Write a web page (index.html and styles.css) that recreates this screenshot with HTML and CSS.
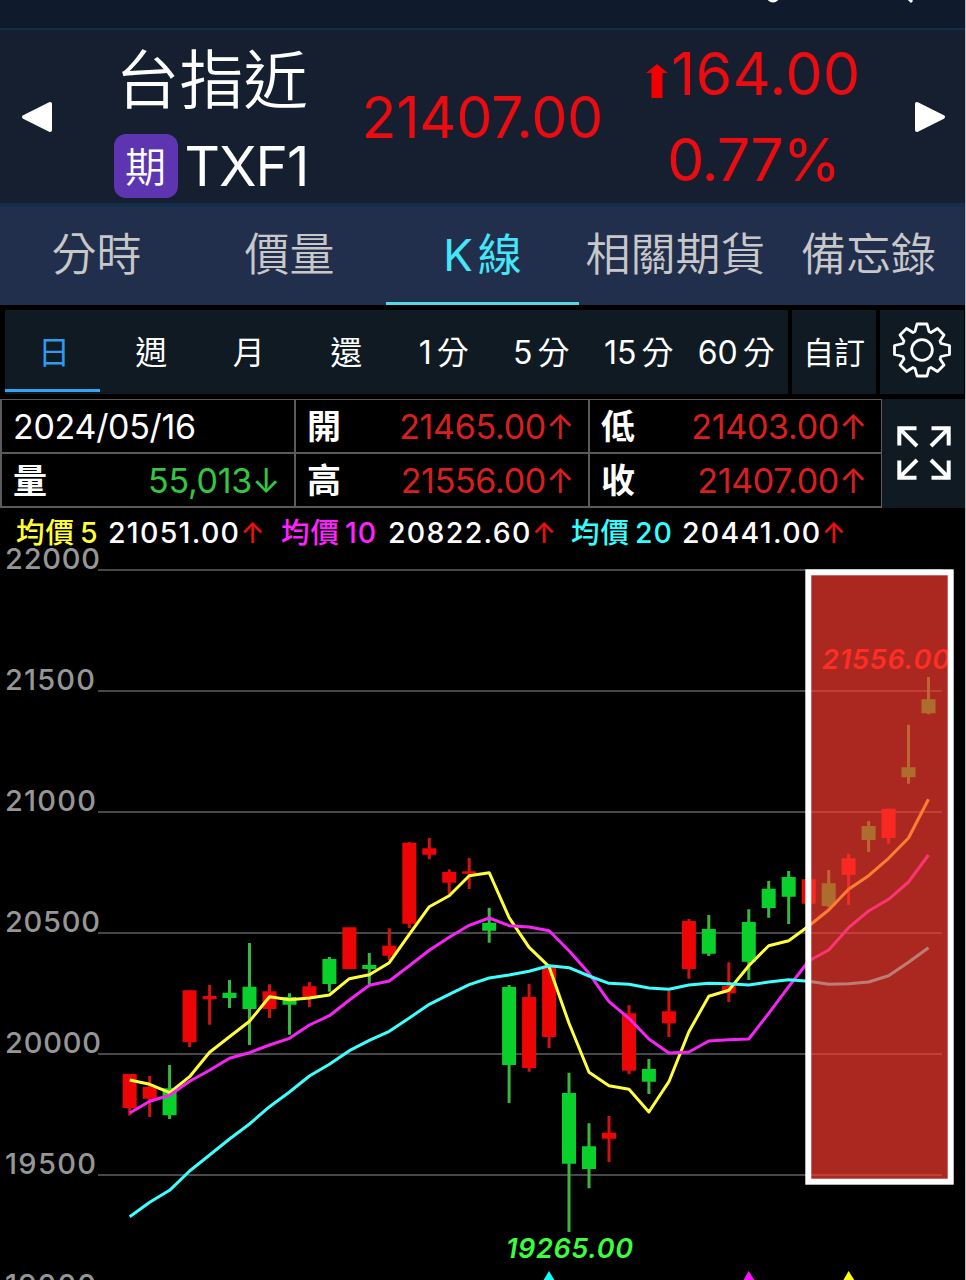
FILE: index.html
```html
<!DOCTYPE html>
<html lang="zh-Hant">
<head>
    <meta charset="utf-8" />
    <title>台指近 TXF1</title>
    <link rel="stylesheet" href="styles.css">
</head>
<body>
<div class="app">
    <div class="topbar">
        <svg width="966" height="28" viewBox="0 0 966 28">
            <path d="M767 -3Q773 5 779 -3" fill="none" stroke="#fff" stroke-width="3" />
            <path d="M908 -2L912 2" stroke="#fff" stroke-width="3" />
        </svg>
    </div>

    <!-- Quote header -->
    <header class="quote">
        <svg class="nav" width="32" height="32" viewBox="0 0 32 32"><path d="M3 16L29 3V29Z" /></svg>
        <div class="name">
            <div class="title">台指近</div>
            <div class="code"><span class="badge">期</span><span>TXF1</span></div>
        </div>
        <div class="price">21407.00</div>
        <div class="change">
            <div class="diff">
                <svg width="22" height="34" viewBox="0 0 22 34"><path d="M11 0L22 9H16.5V34H5.5V9H0Z" fill="#f00000" /></svg>
                <span>164.00</span>
            </div>
            <div class="percent">0.77%</div>
        </div>
        <svg class="nav" width="32" height="32" viewBox="0 0 32 32"><path d="M29 16L3 3V29Z" /></svg>
    </header>

    <nav class="tabs">
        <span>分時</span>
        <span>價量</span>
        <span class="active">K<i></i>線</span>
        <span>相關期貨</span>
        <span>備忘錄</span>
    </nav>

    <!-- Period selection -->
    <div class="toolbar">
        <div class="periods">
            <span class="active">日</span>
            <span>週</span>
            <span>月</span>
            <span>還</span>
            <span>1<i></i>分</span>
            <span>5<i></i>分</span>
            <span>15<i></i>分</span>
            <span>60<i></i>分</span>
        </div>
        <div class="tool">自訂</div>
        <div class="tool">
            <svg class="gear" width="62" height="62" viewBox="-31 -31 62 62">
                <path d="M-7 -18.5L-5 -26H5L7 -18.5L9 -17.5L15.5 -21.5L22 -15L18 -9L19 -6.5L27.5 -4.5V4.5L19 6.5L18 9L22 15L15.5 21.5L9 17.5L7 18.5L5 26H-5L-7 18.5L-9 17.5L-15.5 21.5L-22 15L-18 9L-19 6.5L-27.5 4.5V-4.5L-19 -6.5L-18 -9L-22 -15L-15.5 -21.5L-9 -17.5Z" />
                <circle r="10.3" />
            </svg>
        </div>
    </div>

    <div class="summary">
        <div class="cells">
            <div class="cell"><span class="date">2024/05/16</span></div>
            <div class="cell"><b>開</b><span class="up">21465.00↑</span></div>
            <div class="cell"><b>低</b><span class="up">21403.00↑</span></div>
            <div class="cell"><b>量</b><span class="down">55,013↓</span></div>
            <div class="cell"><b>高</b><span class="up">21556.00↑</span></div>
            <div class="cell"><b>收</b><span class="up">21407.00↑</span></div>
        </div>
        <div class="expand">
            <svg width="56" height="56" viewBox="0 0 56 56">
                <path d="M20.500 3.300H3.300V20.500M3.300 3.300L21 21M35.500 3.300H52.700V20.500M52.700 3.300L35 21M3.300 35.500V52.700H20.500M3.300 52.700L21 35M52.700 35.500V52.700H35.500M52.700 52.700L35 35" />
            </svg>
        </div>
    </div>

    <div class="averages">
        <div class="ma ma5"><span class="label">均價<i></i>5</span><span class="value">21051.00</span><span class="arrow">↑</span></div>
        <div class="ma ma10"><span class="label">均價<i></i>10</span><span class="value">20822.60</span><span class="arrow">↑</span></div>
        <div class="ma ma20"><span class="label">均價<i></i>20</span><span class="value">20441.00</span><span class="arrow">↑</span></div>
    </div>

    <!-- Candlestick chart -->
    <svg class="chart" width="966" height="734" viewBox="0 546 966 734">
        <path class="grid" d="M98 570H942M98 691H942M98 812H942M98 933H942M98 1054H942M98 1175H942" />
        <g class="axis">
            <text x="5" y="569" textLength="95">22000</text>
            <text x="5" y="690" textLength="90">21500</text>
            <text x="5" y="811" textLength="91">21000</text>
            <text x="5" y="932" textLength="95">20500</text>
            <text x="5" y="1053" textLength="96">20000</text>
            <text x="5" y="1174" textLength="91">19500</text>
            <text x="5" y="1295" textLength="91">19000</text>
        </g>

        <path class="wick rise" d="M129.700 1074V1115.500M149.700 1076V1117M189.600 990.500V1047M209.600 985V1024.700M269.500 984.300V1018M309.400 982V1007M389.300 928.300V960M409.300 842V928.300M429.300 838V859.300M449.200 869.300V894M469.200 858V889M529.100 984V1071.700M549.100 967V1048M609 1116V1162M629 1005.300V1074.300M668.900 990.700V1037M688.900 919V978.700M728.800 962.300V1002M848.600 853.700V905M888.600 808.700V843.700" />
        <path class="wick fall" d="M169.600 1065V1119M229.500 980V1008M249.500 943V1045M289.500 993.300V1034.700M329.400 957V991.700M369.300 953V984M489.200 907.700V942.700M509.100 985V1103M569 1072.700V1232M589 1123.300V1188.300M648.900 1059V1094M708.800 915V956M748.800 909.300V980M768.700 881V917.700M788.700 871V924M828.700 870V907.300M868.600 821V852M908.500 724.700V783.700M928.500 677V714.300" />
        <path class="candle rise" d="M129.700 1074V1108M149.700 1087V1098.700M189.600 990.300V1042.300M209.600 996V999.300M269.500 991.300V1009M309.400 986.300V997M349.400 927.300V969M389.300 945.700V955.700M409.300 842.700V923.700M429.300 848.300V854.700M449.200 872V882.700M469.200 871.300V873.700M529.100 997V1068M549.100 966.700V1037M609 1132.700V1138.700M629 1013.300V1070.700M668.900 1011.300V1023.300M688.900 921V969M728.800 985.700V993.300M808.700 879.300V903.700M848.600 858.300V875M888.600 808.700V838" />
        <path class="candle fall" d="M169.600 1088.300V1115.300M229.500 992.700V998M249.500 986.700V1009M289.500 997V1004.700M329.400 959V984M369.300 965V969M489.200 922.700V930.700M509.100 987V1065M569 1093V1163.700M589 1146.300V1169M648.900 1069V1081.700M708.800 929V953.700M748.800 922V961.700M768.700 888.700V908M788.700 877V896.700M828.700 883.300V906M868.600 826V840M908.500 767.300V777.300M928.500 699.300V713.300" />

        <polyline class="line ma5" points="129.7,1080 149.7,1084.300 169.6,1092.700 189.6,1076.700 209.6,1052.300 229.5,1036.700 249.5,1021.300 269.5,996.700 289.5,999.700 309.4,998 329.4,995 349.4,978.700 369.3,974.700 389.3,962.700 409.3,934.300 429.3,906.700 449.2,895.700 469.2,875.700 489.2,872.700 509.1,917.700 529.1,947.300 549.1,966.700 569,1023.300 589,1072.300 609,1085.700 629,1089.300 648.9,1112 668.9,1081.700 688.9,1031.700 708.8,996.300 728.8,990.300 748.8,965.700 768.7,945.700 788.7,940.700 808.7,926 828.7,910 848.6,889.300 868.6,875.700 888.6,858.300 908.5,838 928.5,799.300" />
        <polyline class="line ma10" points="129.7,1113 149.7,1101.300 169.6,1095.300 189.6,1081.300 209.6,1070.300 229.5,1058.300 249.5,1052.700 269.5,1045 289.5,1038.300 309.4,1025 329.4,1015.700 349.4,1000 369.3,985.300 389.3,981 409.3,965.700 429.3,950.300 449.2,937.300 469.2,925.300 489.2,918 509.1,925.700 529.1,927 549.1,930.700 569,950.700 589,973.300 609,1001.700 629,1018.300 648.9,1039 668.9,1053 688.9,1052 708.8,1041 728.8,1039.700 748.8,1039 768.7,1013.300 788.7,986.700 808.7,961 828.7,950 848.6,927.700 868.6,911 888.6,899.300 908.5,882 928.5,855" />
        <polyline class="line ma20" points="129.7,1216.700 149.7,1202.300 169.6,1190.300 189.6,1171 209.6,1155 229.5,1139 249.5,1124 269.5,1106.700 289.5,1092 309.4,1076 329.4,1064.300 349.4,1050.700 369.3,1040.300 389.3,1031.300 409.3,1018 429.3,1004.300 449.2,994.300 469.2,984.700 489.2,978 509.1,975 529.1,971.300 549.1,965.700 569,967.700 589,976 609,983.300 629,984.300 648.9,988 668.9,989.300 688.9,985 708.8,983.300 728.8,983.700 748.8,985 768.7,982 788.7,979.700 808.7,981.300 828.7,984.300 848.6,983.700 868.6,982 888.6,975.700 908.5,962.300 928.5,947.700" />

        <text class="extreme high" x="822" y="669" textLength="128">21556.00</text>
        <text class="extreme low" x="506" y="1258" textLength="127">19265.00</text>

        <path fill="#1ff" d="M549 1271L558 1286H540Z" />
        <path fill="#f1f" d="M748.700 1271L758 1286H740Z" />
        <path fill="#ff1" d="M848.600 1271L858 1286H840Z" />

        <!-- Highlighted range -->
        <rect class="range" x="808.300" y="572.300" width="142.400" height="609.400" />
    </svg>
</div>
</body>
</html>
```

FILE: styles.css
```css
body {
    margin: 0;
    background: #000;
    color: #fff;
    font-family: Inter, "Noto Sans CJK TC", sans-serif;
}
.app {
    width: 965px;
    height: 1280px;
    overflow: hidden;
    border-right: 1px solid #b5b8bb;
}
i {
    display: inline-block;
    width: 5px;
}
.topbar {
    height: 28px;
    background: #0f1b2d;
    border-bottom: 2px solid #112d48;
}
.topbar svg {
    display: block;
}

.quote {
    display: grid;
    grid-template-columns: 73px 279px 261px 281px 71px;
    height: 173px;
    align-items: center;
    justify-items: center;
    background: #151f30;
    border-bottom: 4px solid #142d4a;
}
.nav {
    fill: #fff;
    stroke: #fff;
    stroke-width: 4;
    stroke-linejoin: round;
}
.title {
    height: 101px;
    margin-left: -1px;
    line-height: 100px;
    font-size: 64px;
    font-weight: 350;
}
.code {
    display: flex;
    align-items: center;
    gap: 7px;
    height: 69px;
    padding-bottom: 3px;
    margin-left: -3px;
    font-size: 55px;
    letter-spacing: -1px;
}
.badge {
    width: 64px;
    height: 64px;
    line-height: 66px;
    border-radius: 12px;
    background: #5e35b1;
    font-size: 41px;
    font-weight: 350;
    letter-spacing: 0;
    text-align: center;
}
.price, .change {
    color: #ea0c10;
}
.price {
    font-size: 57px;
    padding-top: 2px;
}
.change {
    font-size: 59px;
    line-height: 86px;
    text-align: center;
}
.diff {
    display: flex;
    gap: 3px;
    align-items: center;
    letter-spacing: 0.5px;
}
.percent {
    letter-spacing: -1px;
}
.diff svg {
    margin-top: 14px;
}

.tabs {
    display: grid;
    grid-template-columns: repeat(5, 193px);
    height: 98px;
    background: #222f4c;
    color: #c8c8ca;
    font-size: 45px;
    font-weight: 350;
    line-height: 96px;
    text-align: center;
    white-space: nowrap;
}
.tabs span {
    height: 95px;
}
.tabs .active {
    color: #45e6fa;
    border-bottom: 3px solid #55d9ea;
    font-size: 44px;
    font-weight: 400;
}

.toolbar {
    display: flex;
    gap: 4px;
    height: 84px;
    padding: 5px 1px 5px 5px;
    font-size: 32px;
    line-height: 85px;
}
.periods {
    display: grid;
    grid-template-columns: repeat(8, 97.500px);
    width: 783px;
    background: #0f1a22;
    text-align: center;
}
.periods .active {
    width: 95px;
    height: 79px;
    color: #2f9bf0;
    border-bottom: 3px solid #35a3ee;
    text-indent: 3px;
}
.tool {
    width: 84px;
    background: #0f1a22;
    text-align: center;
    font-size: 31px;
}
.gear {
    display: block;
    margin: 9px auto 0;
    fill: none;
    stroke: #fff;
    stroke-width: 2.8;
    stroke-linejoin: round;
}

.summary {
    display: flex;
    height: 109px;
}
.cells {
    display: grid;
    grid-template-columns: 292px 292px 291px;
    grid-template-rows: 52px 52px;
    gap: 2px;
    box-sizing: border-box;
    width: 882px;
    padding: 1px 1px 2px 2px;
    background: #5a5a5a;
}
.cell {
    display: flex;
    align-items: center;
    justify-content: space-between;
    padding: 0 14px 0 12px;
    background: #000;
    font-size: 34px;
}
.date {
    margin-left: -1px;
    letter-spacing: -0.3px;
}
.cell b {
    margin: -3px 0 0 -1px;
    font-weight: 600;
}
.up, .down {
    letter-spacing: -0.3px;
}
.up {
    color: #d81f20;
}
.down {
    color: #32c641;
}
.expand {
    width: 83px;
    background: #0f1a22;
}
.expand svg {
    display: block;
    margin: 26px auto 0;
    fill: none;
    stroke: #fff;
    stroke-width: 4;
}

.averages {
    display: flex;
    height: 38px;
    padding-left: 16px;
    font-size: 28.5px;
    font-weight: 500;
    line-height: 50px;
    white-space: nowrap;
}
.ma {
    display: flex;
    flex: none;
    width: 265px;
}
.ma10 {
    width: 290px;
}
.label {
    flex: none;
    width: 92px;
    letter-spacing: 1px;
}
.ma10 .label {
    width: 107px;
}
.ma20 .label {
    width: 111px;
}
.value {
    letter-spacing: 1.3px;
}
.ma5 .label {
    color: #ff3;
}
.ma10 .label {
    color: #f2f;
}
.ma20 .label {
    color: #3ff;
}
.arrow {
    color: #e81010;
}

.chart {
    display: block;
}
.grid {
    stroke: #484848;
    stroke-width: 2;
}
.axis {
    fill: #969696;
    font-size: 29px;
    font-weight: 500;
}
.rise {
    stroke: #eb0505;
}
.fall {
    stroke: #0ad02c;
}
.wick {
    stroke-width: 3;
}
.wick.rise {
    stroke: #d01212;
}
.wick.fall {
    stroke: #38b83e;
}
.candle {
    stroke-width: 14;
}
.line {
    fill: none;
    stroke-width: 3;
    stroke-linejoin: round;
}
.line.ma5 {
    stroke: #ffff3c;
}
.line.ma10 {
    stroke: #f425f4;
}
.line.ma20 {
    stroke: #3cffff;
}
.extreme {
    font-size: 27px;
    font-style: italic;
    font-weight: 600;
}
.high {
    fill: #ff1010;
}
.low {
    fill: #3cff3c;
}
.range {
    fill: rgba(255, 59, 48, 0.67);
    stroke: #fff;
    stroke-width: 6;
}
```
